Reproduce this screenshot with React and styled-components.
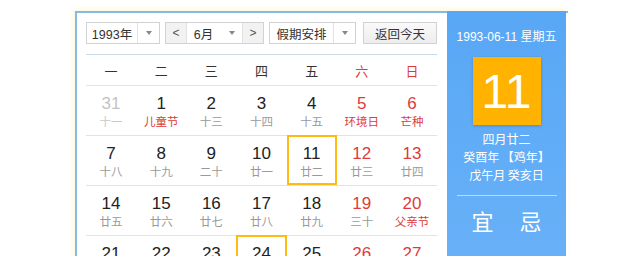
import React from "react";
import styled, { createGlobalStyle } from "styled-components";

const Global = createGlobalStyle`
  html, body { margin: 0; padding: 0; background: #fff; }
  body { font-family: "Liberation Sans", Arial, "Noto Sans CJK SC", sans-serif; }
`;

const Frame = styled.div`
  margin: 11px 0 0 75px;
  width: 491px;
  display: flex;
  border-top: 2px solid #7fbce9;
  border-left: 2px solid #7fbce9;
  box-shadow: -2px -2px 4px rgba(255, 236, 180, 0.45);
  height: 300px;
`;

const Main = styled.div`
  width: 351px;
  padding: 9px 10px 0 9px;
  background: #fff;
`;

const Toolbar = styled.div`
  display: flex;
  align-items: center;
  height: 22px;
  padding-bottom: 10px;
  border-bottom: 1px solid #c9dbe9;
`;

const Box = styled.div`
  display: flex;
  height: 20px;
  border: 1px solid #d2d2d2;
  margin-right: ${(p) => p.$mr || 0}px;
  background: #fff;
  font-size: 12.5px;
  color: #333;
`;

const Label = styled.div`
  width: ${(p) => p.$w}px;
  display: flex;
  align-items: center;
  justify-content: center;
`;

const Arrow = styled.div`
  width: 21px;
  border-left: 1px solid ${(p) => (p.$plain ? "transparent" : "#e2e2e2")};
  display: flex;
  align-items: center;
  justify-content: center;
  &::after {
    content: "";
    border-left: 3.5px solid transparent;
    border-right: 3.5px solid transparent;
    border-top: 4px solid #888;
  }
`;

const Step = styled.div`
  width: 20px;
  background: #f2f2f2;
  color: #555;
  display: flex;
  align-items: center;
  justify-content: center;
  font-size: 12px;
  border-${(p) => p.$side}: 1px solid #e2e2e2;
`;

const TodayBtn = styled.div`
  margin-left: auto;
  width: 72px;
  height: 20px;
  border: 1px solid #d2d2d2;
  background: linear-gradient(#fafafa, #ededed);
  display: flex;
  align-items: center;
  justify-content: center;
  font-size: 12.5px;
  color: #333;
`;

const Grid = styled.div`
  display: grid;
  grid-template-columns: repeat(7, 1fr);
`;

const Head = styled.div`
  height: 30px;
  display: flex;
  align-items: center;
  justify-content: center;
  font-size: 13px;
  font-family: "Noto Sans CJK SC", sans-serif;
  color: ${(p) => (p.$red ? "#dd3b3b" : "#333")};
  border-bottom: 1px solid #e3e3e3;
`;

const Cell = styled.div`
  border-bottom: 1px solid #e3e3e3;
  position: relative;
  display: flex;
  flex-direction: column;
  align-items: center;
  padding-top: 8px;
  box-sizing: border-box;
  height: 50px;
  &::after {
    content: "";
    display: ${(p) => (p.$mark ? "block" : "none")};
    position: absolute;
    left: 0;
    top: -1px;
    right: 0;
    bottom: 0;
    border: 2px solid #ffbb11;
  }
`;

const Num = styled.div`
  font-size: 17px;
  line-height: 20px;
  color: ${(p) => (p.$dim ? "#c4c4c4" : p.$red ? "#dd3b3b" : "#222")};
`;

const Lunar = styled.div`
  font-size: 11.5px;
  line-height: 15px;
  font-family: "Noto Sans CJK SC", sans-serif;
  color: ${(p) => (p.$fest ? "#dd3b3b" : p.$dim ? "#c9c9c9" : "#9a9a9a")};
`;

const Side = styled.div`
  width: 119px;
  background: linear-gradient(#58a7f5, #6cb3f9);
  margin-top: -2px;
  color: #fff;
  display: flex;
  flex-direction: column;
  align-items: center;
  font-family: "Noto Sans CJK SC", sans-serif;
`;

const DateLine = styled.div`
  margin-top: 18px;
  font-size: 12px;
  line-height: 16px;
  font-family: "Liberation Sans", "Noto Sans CJK SC", sans-serif;
`;

const BigDay = styled.div`
  margin-top: 12px;
  width: 68px;
  height: 68px;
  background: #ffb300;
  box-shadow: 0 1px 3px rgba(0, 0, 0, 0.2);
  display: flex;
  align-items: center;
  justify-content: center;
  font-family: "Liberation Sans", sans-serif;
  font-size: 48px;
  font-weight: 300;
`;

const Info = styled.div`
  margin-top: 5px;
  font-size: 12px;
  line-height: 18px;
  text-align: center;
`;

const Rule = styled.div`
  margin-top: 11px;
  width: 100px;
  border-top: 1px solid rgba(255, 255, 255, 0.55);
`;

const YiJi = styled.div`
  margin-top: 9px;
  display: flex;
  gap: 26px;
  font-size: 22px;
  line-height: 30px;
`;

const weeks = ["一", "二", "三", "四", "五", "六", "日"];
const rows = [
  [["31", "十一", "dim"], ["1", "儿童节", "fest"], ["2", "十三"], ["3", "十四"], ["4", "十五"], ["5", "环境日", "fest"], ["6", "芒种", "fest"]],
  [["7", "十八"], ["8", "十九"], ["9", "二十"], ["10", "廿一"], ["11", "廿二", "sel"], ["12", "廿三"], ["13", "廿四"]],
  [["14", "廿五"], ["15", "廿六"], ["16", "廿七"], ["17", "廿八"], ["18", "廿九"], ["19", "三十"], ["20", "父亲节", "fest"]],
  [["21", "初一"], ["22", "初二"], ["23", "初三"], ["24", "初四", "sel"], ["25", "初五"], ["26", "初六"], ["27", "初七"]],
];

export default function App() {
  return (
    <>
      <Global />
      <Frame>
        <Main>
          <Toolbar>
            <Box $mr={5}>
              <Label $w={50}>1993年</Label>
              <Arrow />
            </Box>
            <Box $mr={5}>
              <Step $side="right">&lt;</Step>
              <Label $w={33}>6月</Label>
              <Arrow $plain />
              <Step $side="left">&gt;</Step>
            </Box>
            <Box>
              <Label $w={63}>假期安排</Label>
              <Arrow />
            </Box>
            <TodayBtn>返回今天</TodayBtn>
          </Toolbar>
          <Grid>
            {weeks.map((w, i) => (
              <Head key={w} $red={i >= 5}>{w}</Head>
            ))}
            {rows.map((r) =>
              r.map(([n, l, f], i) => (
                <Cell key={n} $mark={f === "sel"}>
                  <Num $dim={f === "dim"} $red={i >= 5}>{n}</Num>
                  <Lunar $fest={f === "fest"} $dim={f === "dim"}>{l}</Lunar>
                </Cell>
              ))
            )}
          </Grid>
        </Main>
        <Side>
          <DateLine>1993-06-11 星期五</DateLine>
          <BigDay>11</BigDay>
          <Info>
            四月廿二
            <br />
            癸酉年 【鸡年】
            <br />
            戊午月 癸亥日
          </Info>
          <Rule />
          <YiJi>
            <span>宜</span>
            <span>忌</span>
          </YiJi>
        </Side>
      </Frame>
    </>
  );
}
